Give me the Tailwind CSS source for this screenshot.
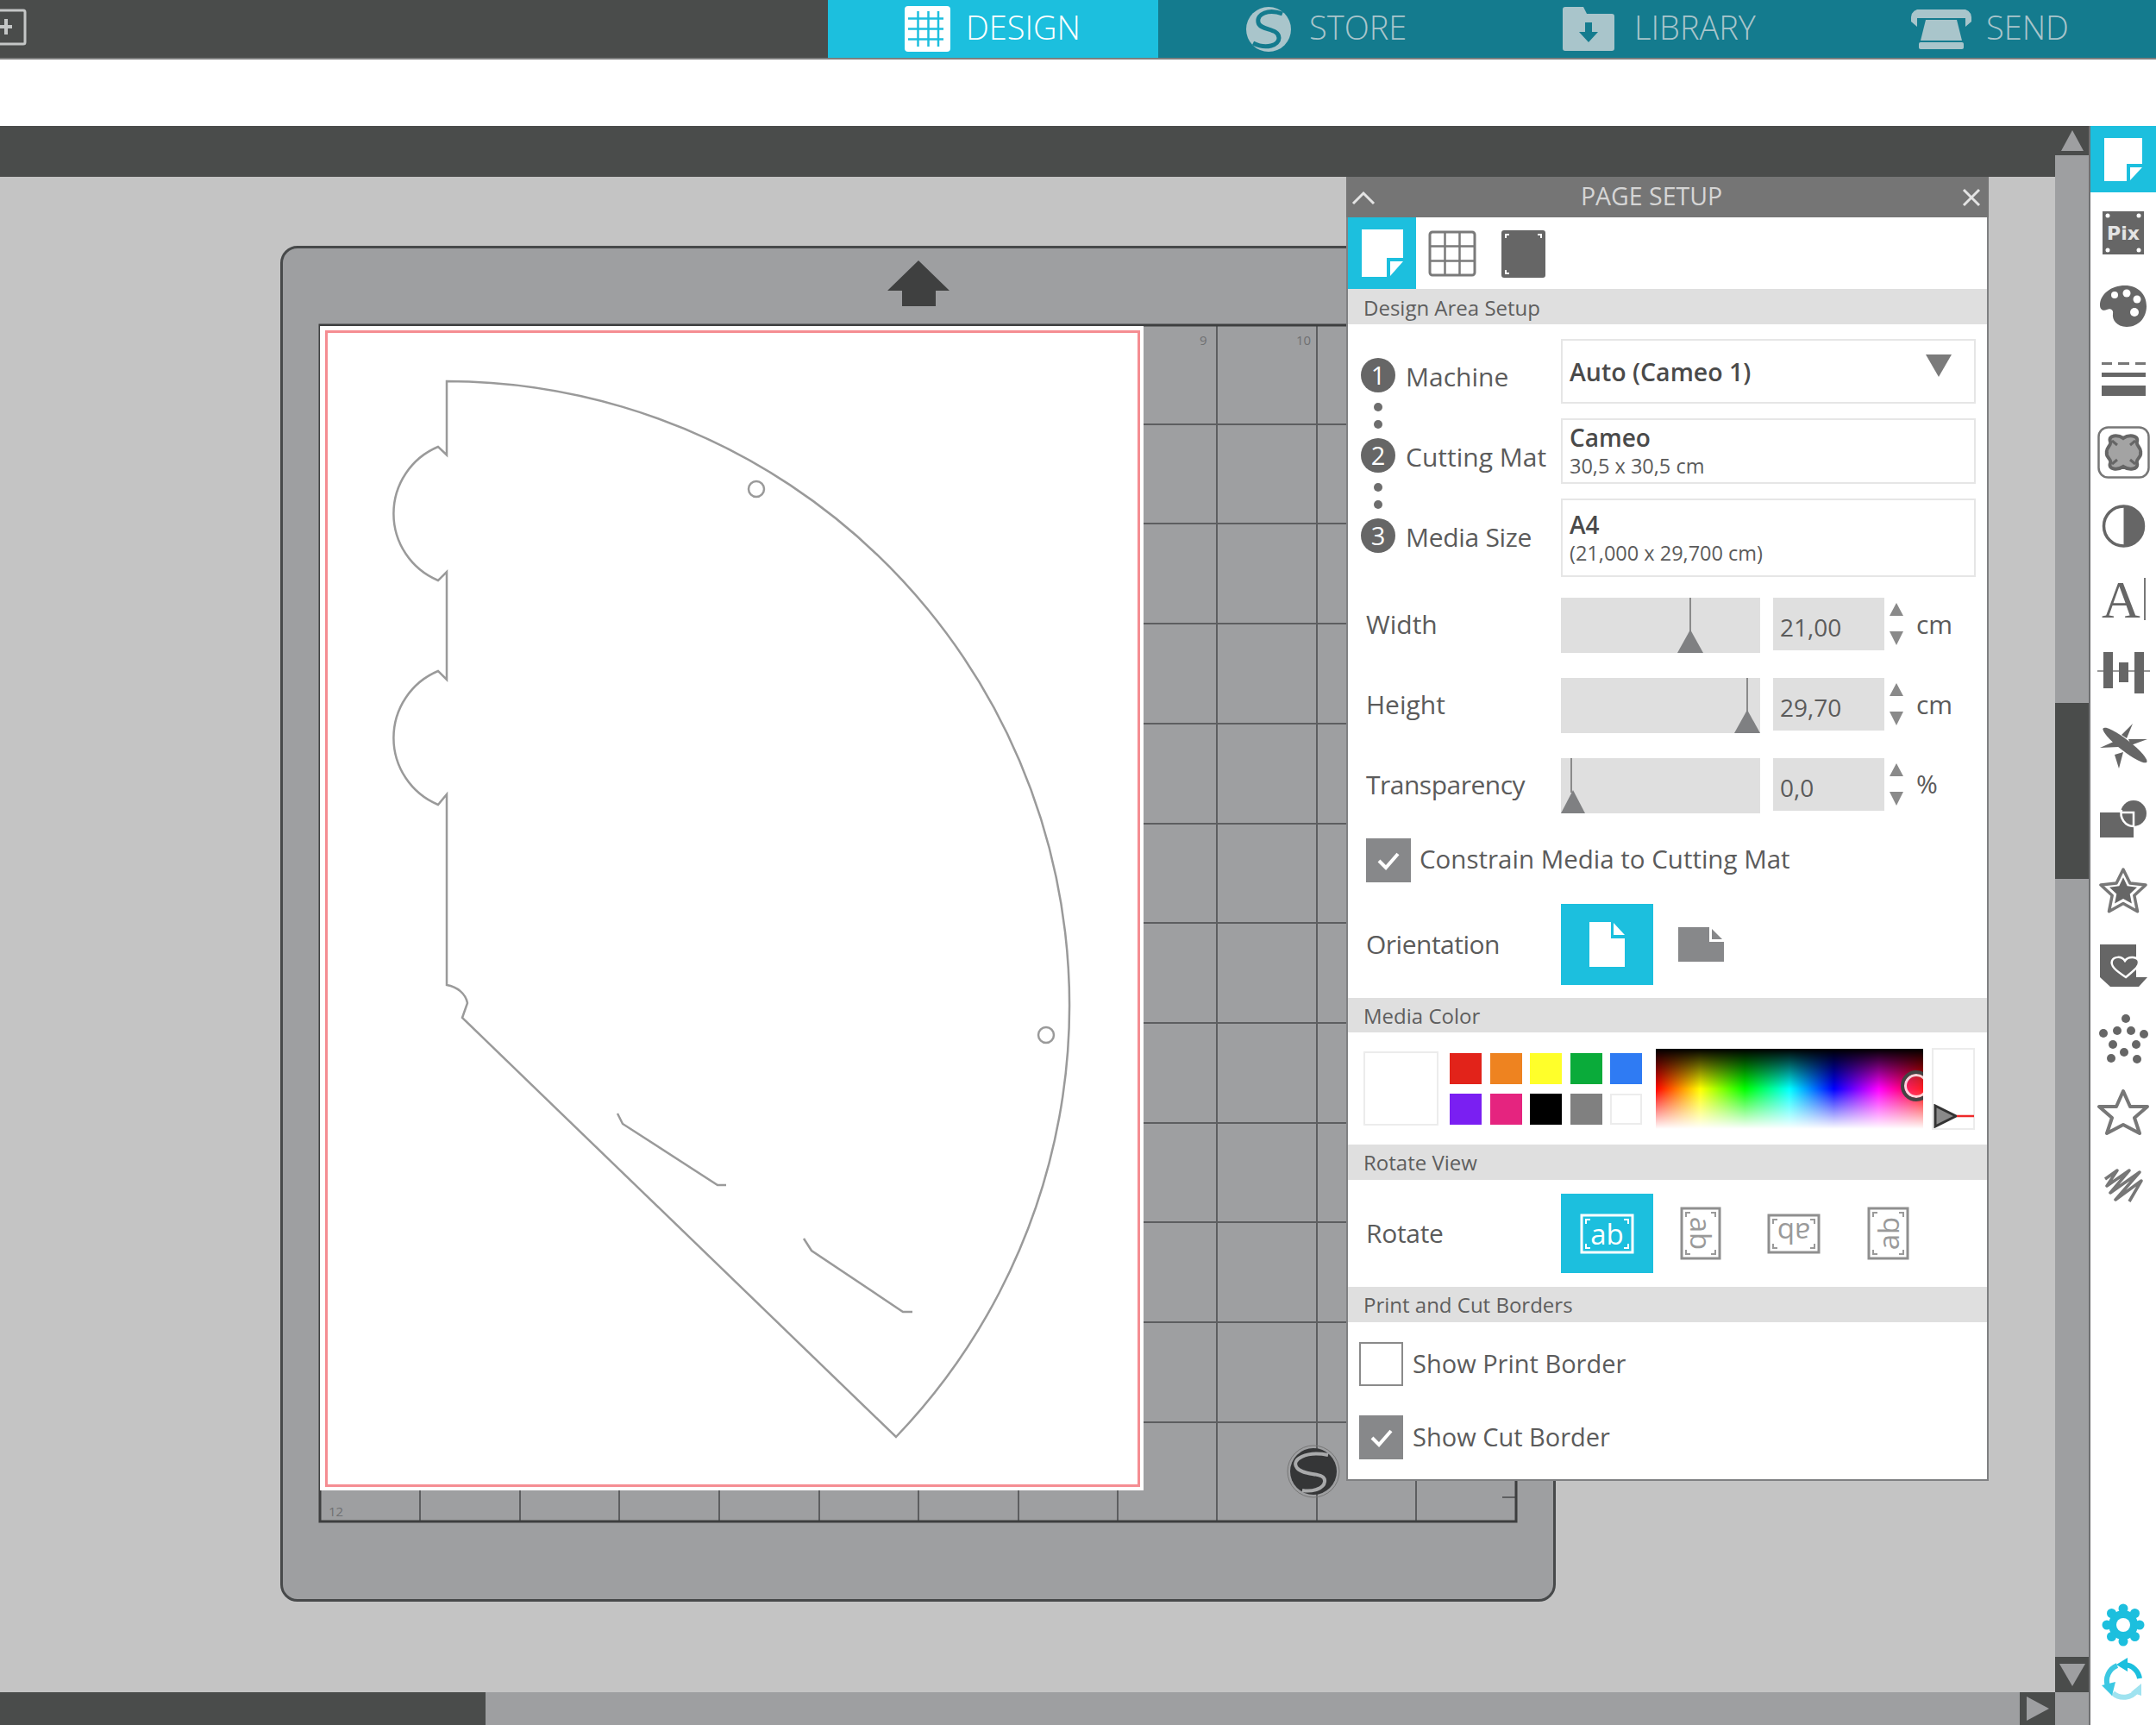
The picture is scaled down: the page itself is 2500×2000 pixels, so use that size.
<!DOCTYPE html>
<html lang="en">
<head>
<meta charset="UTF-8">
<title>Page Setup</title>
<script src="https://cdn.jsdelivr.net/npm/@tailwindcss/browser@4"></script>
</head>
<body class="font-['Open_Sans',sans-serif]">
<div class="w-[2500px] h-[2000px] flex flex-col overflow-hidden bg-white">

  <!-- top nav -->
  <div class="flex h-[69px] shrink-0 bg-[#4a4c4b] border-b-2 border-[#7d7e7e]">
    <div class="w-[960px] pt-[10px]">
      <svg width="31" height="43" viewBox="0 0 31 43"><rect x="-20" y="2" width="49" height="39" rx="2" fill="none" stroke="#c4c6c6" stroke-width="3"/><path d="M0 21H14M7 12V30" stroke="#c4c6c6" stroke-width="4"/></svg>
    </div>
    <div class="w-[383px] h-[67px] bg-[#1cbfde] flex items-center pl-[89px] gap-[18px] text-white text-[38px] font-light">
      <svg width="53" height="53" viewBox="0 0 53 53"><rect width="53" height="53" rx="4" fill="#fff"/><path d="M17.500 6V47M29.500 6V47M41 6V47M6 14.500H47M6 26.500H47M6 38.500H47" stroke="#1cbfde" stroke-width="2.500" transform="translate(-2 0)"/></svg>
      <span class="-mt-[5px]">DESIGN</span>
    </div>
    <div class="flex-1 h-[67px] bg-[#147b8e] flex items-center text-[#a9c5cb] text-[38px] font-light">
      <div class="flex items-center gap-[21px] ml-[102px] w-[367px]">
        <svg width="52" height="52" viewBox="0 0 52 52"><circle cx="26" cy="26" r="26" fill="#a9c5cb"/><path d="M42 8C26 2 12 8 14 18C16 28 38 24 38 36C38 44 24 50 8 42" fill="none" stroke="#147b8e" stroke-width="5"/></svg>
        <span class="-mt-[5px]">STORE</span>
      </div>
      <div class="flex items-center gap-[23px] w-[403px]">
        <svg width="60" height="51" viewBox="0 0 60 51"><path d="M0 3Q0 0 3 0H24L28 8H57Q60 8 60 11V48Q60 51 57 51H3Q0 51 0 48Z" fill="#a9c5cb"/><path d="M26 18H34V29H41L30 41L19 29H26Z" fill="#147b8e"/></svg>
        <span class="-mt-[5px]">LIBRARY</span>
      </div>
      <div class="flex items-center gap-[16px]">
        <svg width="72" height="46" viewBox="0 0 72 46"><path d="M8 0H64Q72 2 71 14L64 20V10H8V20L1 14Q0 2 8 0Z" fill="#a9c5cb"/><path d="M18 12H54L60 36H12Z" fill="#a9c5cb"/><rect x="10" y="38" width="52" height="8" rx="2" fill="#a9c5cb"/></svg>
        <span class="-mt-[5px]">SEND</span>
      </div>
    </div>
  </div>

  <!-- white toolbar -->
  <div class="h-[77px] shrink-0 bg-white"></div>

  <div class="flex flex-1 min-h-0">
    <!-- work area -->
    <div class="flex-1 flex flex-col min-w-0">
      <div class="flex flex-1 min-h-0">
        <div class="flex-1 flex flex-col min-w-0">
          <div class="h-[59px] shrink-0 bg-[#4a4c4b]"></div>
          <div class="flex-1 relative bg-[#c4c4c4]">

            <!-- cutting mat -->
            <div class="absolute left-[325px] top-[80px] w-[1479px] h-[1572px] rounded-[20px] border-[3px] border-[#47494a] bg-[#9e9fa1] overflow-hidden">
              <svg width="1473" height="1566" viewBox="328 288 1473 1566" class="block">
                <path d="M1065 302L1101 337H1085V355H1046V337H1029Z" fill="#3f4040"/>
                <g stroke="#5d5e60" stroke-width="2">
                  <path d="M371 492H1758M371 607H1758M371 723H1758M371 839H1758M371 955H1758M371 1070H1758M371 1186H1758M371 1302H1758M371 1417H1758M371 1533H1758M371 1649H1758"/>
                  <path d="M487 377V1764M603 377V1764M718 377V1764M834 377V1764M950 377V1764M1065 377V1764M1181 377V1764M1296 377V1764M1411 377V1764M1527 377V1764M1642 377V1764M1742 1736H1758"/>
                </g>
                <path d="M371 377H1758V1764H371Z" fill="none" stroke="#3d3e3f" stroke-width="3"/>
                <text x="1391" y="400" font-family="Open Sans" font-size="15" fill="#6f7072">9</text>
                <text x="1503" y="400" font-family="Open Sans" font-size="15" fill="#6f7072">10</text>
                <text x="381" y="1758" font-family="Open Sans" font-size="15" fill="#6f7072">12</text>
                <circle cx="1523" cy="1706" r="27" fill="#353637"/>
                <circle cx="1523" cy="1706" r="30" fill="none" stroke="#777" stroke-width="1"/>
                <path d="M1540 1687C1515 1682 1496 1692 1504 1702C1512 1712 1538 1706 1536 1718C1535 1726 1522 1730 1510 1728" fill="none" stroke="#a9aaab" stroke-width="4"/>
                <rect x="371" y="378" width="955" height="1350" fill="#fff"/>
                <rect x="378.500" y="384.500" width="942" height="1338" fill="none" stroke="#f58d92" stroke-width="3"/>
                <g fill="none" stroke="#9a9a9a" stroke-width="2.500">
                  <path d="M518 442A723.500 723.500 0 0 1 1039 1666L536 1180L542 1163C540 1152 530 1144 518 1142V921L508 933A84 84 0 0 1 508 778L518 788V663L508 673A84 84 0 0 1 508 518L518 527.500Z"/>
                  <circle cx="877" cy="567" r="9"/>
                  <circle cx="1213" cy="1200" r="9"/>
                  <path d="M716 1291L722 1303L832 1374H842M932 1436L941 1450L1047 1521H1058"/>
                </g>
              </svg>
            </div>

            <!-- page setup panel -->
            <div class="absolute left-[1561px] top-0 w-[745px] h-[1512px] flex flex-col bg-white border-x-2 border-b-2 border-[#7f8082] text-[#5b5b5b]">
              <div class="h-[47px] shrink-0 bg-[#757575] -mx-[2px] flex items-center justify-between pl-[5px] pr-[7px] text-[#d5d5d5]">
                <svg width="30" height="20" viewBox="0 0 30 20"><path d="M3 17L15 5L27 17" fill="none" stroke="#e4e4e4" stroke-width="3"/></svg>
                <span class="text-[28.500px] mr-[39px] -mt-[2px]">PAGE SETUP</span>
                <svg width="26" height="26" viewBox="0 0 26 26"><path d="M4 4L22 22M22 4L4 22" stroke="#e4e4e4" stroke-width="3"/></svg>
              </div>

              <div class="h-[83px] shrink-0 flex items-start">
                <div class="w-[79px] h-[83px] bg-[#1cbfde] flex items-center justify-center">
                  <svg width="48" height="55" viewBox="0 0 48 55"><path d="M0 0H48V33H29V55H0Z" fill="#fff"/><path d="M33 37H48L33 54Z" fill="#fff"/></svg>
                </div>
                <svg class="mt-[15px] ml-[14px]" width="56" height="54" viewBox="0 0 56 54"><rect x="2" y="2" width="52" height="50" rx="3" fill="none" stroke="#7a7a7a" stroke-width="3"/><path d="M19.500 2V52M36.500 2V52M2 18.500H54M2 35.500H54" stroke="#7a7a7a" stroke-width="2.500"/></svg>
                <svg class="mt-[15px] ml-[29px]" width="51" height="55" viewBox="0 0 51 55"><rect width="51" height="55" rx="3" fill="#666"/><path d="M5 9V5H9M42 5H46V9M5 46V50H9" fill="none" stroke="#fff" stroke-width="2"/></svg>
              </div>

              <div class="h-[41px] shrink-0 bg-[#dfdfdf] pl-[18px] pt-[2px] flex items-center text-[24px] text-[#5e5e5e]">Design Area Setup</div>

              <!-- machine, mat, media -->
              <div class="flex h-[293px] shrink-0">
                <div class="w-[247px] shrink-0 pl-[15px] pt-[39px] flex flex-col text-[30px] leading-[40px]">
                  <div class="flex items-center gap-[12px] h-[40px]"><span class="w-[40px] h-[40px] rounded-full bg-[#666] text-white flex items-center justify-center text-[29px]">1</span><span class="mt-[3px]">Machine</span></div>
                  <div class="h-[53px] w-[40px] flex flex-col items-center justify-center gap-[10px]"><i class="w-[10px] h-[10px] rounded-full bg-[#6d6d6d]"></i><i class="w-[10px] h-[10px] rounded-full bg-[#6d6d6d]"></i></div>
                  <div class="flex items-center gap-[12px] h-[40px]"><span class="w-[40px] h-[40px] rounded-full bg-[#666] text-white flex items-center justify-center text-[29px]">2</span><span class="mt-[3px] whitespace-nowrap">Cutting Mat</span></div>
                  <div class="h-[53px] w-[40px] flex flex-col items-center justify-center gap-[10px]"><i class="w-[10px] h-[10px] rounded-full bg-[#6d6d6d]"></i><i class="w-[10px] h-[10px] rounded-full bg-[#6d6d6d]"></i></div>
                  <div class="flex items-center gap-[12px] h-[40px]"><span class="w-[40px] h-[40px] rounded-full bg-[#666] text-white flex items-center justify-center text-[29px]">3</span><span class="mt-[3px] tracking-[-0.3px]">Media Size</span></div>
                </div>
                <div class="w-[481px] pt-[17px] flex flex-col gap-[17px]">
                  <div class="h-[75px] border-2 border-[#e6e6e6] pl-[8px] pr-[26px] flex items-center justify-between text-[28.500px] font-semibold text-[#4a4a4a]">
                    <span class="mt-[2px]">Auto (Cameo 1)</span>
                    <svg class="-mt-[13px]" width="30" height="26" viewBox="0 0 30 26"><path d="M0 0H30L15 26Z" fill="#7b7b7b"/></svg>
                  </div>
                  <div class="h-[76px] border-2 border-[#e6e6e6] pl-[8px] flex flex-col justify-center">
                    <span class="text-[28px] leading-[34px] font-semibold text-[#4a4a4a]">Cameo</span>
                    <span class="text-[23.500px] leading-[32px]">30,5 x 30,5 cm</span>
                  </div>
                  <div class="h-[91px] border-2 border-[#e6e6e6] pl-[8px] flex flex-col justify-center">
                    <span class="text-[28px] leading-[34px] font-semibold text-[#4a4a4a]">A4</span>
                    <span class="text-[23.500px] leading-[32px]">(21,000 x 29,700 cm)</span>
                  </div>
                </div>
              </div>

              <!-- sliders -->
              <div class="flex flex-col gap-[29px] pt-[24px] shrink-0">
                <div class="flex h-[64px]">
                  <span class="w-[247px] pl-[21px] text-[30px] leading-[64px] -mt-[1px]">Width</span>
                  <div class="w-[231px] h-[64px] bg-[#dfdfdf] relative"><i class="absolute left-[149px] top-0 w-[2px] h-[40px] bg-[#8a8a8a]"></i><svg class="absolute left-[135px] bottom-0" width="30" height="27" viewBox="0 0 30 27"><path d="M15 0L30 27H0Z" fill="#7f8082"/></svg></div>
                  <div class="w-[129px] h-[61px] ml-[15px] bg-[#dfdfdf] pl-[8px] text-[28px] leading-[68px]">21,00</div>
                  <svg class="ml-[6px] mt-[6px]" width="16" height="50" viewBox="0 0 16 50"><path d="M8 0L16 15H0ZM0 33H16L8 49Z" fill="#8a8a8a"/></svg>
                  <span class="ml-[15px] text-[30px] leading-[62px]">cm</span>
                </div>
                <div class="flex h-[64px]">
                  <span class="w-[247px] pl-[21px] text-[30px] leading-[64px] -mt-[1px]">Height</span>
                  <div class="w-[231px] h-[64px] bg-[#dfdfdf] relative"><i class="absolute left-[215px] top-0 w-[2px] h-[40px] bg-[#8a8a8a]"></i><svg class="absolute left-[201px] bottom-0" width="30" height="27" viewBox="0 0 30 27"><path d="M15 0L30 27H0Z" fill="#7f8082"/></svg></div>
                  <div class="w-[129px] h-[61px] ml-[15px] bg-[#dfdfdf] pl-[8px] text-[28px] leading-[68px]">29,70</div>
                  <svg class="ml-[6px] mt-[6px]" width="16" height="50" viewBox="0 0 16 50"><path d="M8 0L16 15H0ZM0 33H16L8 49Z" fill="#8a8a8a"/></svg>
                  <span class="ml-[15px] text-[30px] leading-[62px]">cm</span>
                </div>
                <div class="flex h-[64px]">
                  <span class="w-[247px] pl-[21px] text-[30px] leading-[64px] -mt-[1px] tracking-[-0.5px]">Transparency</span>
                  <div class="w-[231px] h-[64px] bg-[#dfdfdf] relative"><i class="absolute left-[11px] top-0 w-[2px] h-[40px] bg-[#8a8a8a]"></i><svg class="absolute left-0 bottom-0" width="28" height="27" viewBox="0 0 28 27"><path d="M14 0L28 27H0Z" fill="#7f8082"/></svg></div>
                  <div class="w-[129px] h-[61px] ml-[15px] bg-[#dfdfdf] pl-[8px] text-[28px] leading-[68px]">0,0</div>
                  <svg class="ml-[6px] mt-[6px]" width="16" height="50" viewBox="0 0 16 50"><path d="M8 0L16 15H0ZM0 33H16L8 49Z" fill="#8a8a8a"/></svg>
                  <span class="ml-[15px] text-[30px] leading-[60px]">%</span>
                </div>
              </div>

              <!-- constrain -->
              <div class="flex items-center gap-[10px] pl-[21px] mt-[29px] h-[51px] shrink-0 text-[29.500px]">
                <span class="w-[52px] h-[51px] bg-[#87888a] flex items-center justify-center">
                  <svg width="28" height="24" viewBox="0 0 28 24"><path d="M3 12L11 20L25 4" fill="none" stroke="#fff" stroke-width="4"/></svg>
                </span>
                <span class="-mt-[2px]">Constrain Media to Cutting Mat</span>
              </div>

              <!-- orientation -->
              <div class="flex items-center mt-[25px] h-[94px] shrink-0">
                <span class="w-[247px] pl-[21px] text-[30px] tracking-[-0.5px] -mt-[2px]">Orientation</span>
                <div class="w-[107px] h-[94px] bg-[#1cbfde] flex items-center justify-center">
                  <svg width="41" height="52" viewBox="0 0 41 52"><path d="M0 0H25V19H41V52H0Z" fill="#fff"/><path d="M28 1L41 15H28Z" fill="#fff"/></svg>
                </div>
                <svg class="ml-[29px]" width="53" height="40" viewBox="0 0 53 40"><path d="M0 0H36V17H53V40H0Z" fill="#87888a"/><path d="M39 2L51 14H39Z" fill="#87888a"/></svg>
              </div>

              <!-- media colour -->
              <div class="h-[40px] mt-[15px] shrink-0 bg-[#dfdfdf] pl-[18px] pt-[1px] flex items-center text-[24px] text-[#5e5e5e]">Media Color</div>
              <div class="flex h-[130px] shrink-0 pl-[18px]">
                <div class="w-[87px] h-[86px] mt-[22px] border-2 border-[#ececec]"></div>
                <div class="ml-[13px] mt-[24px] grid grid-cols-[repeat(5,37px)] grid-rows-[repeat(2,36px)] gap-x-[9.500px] gap-y-[11px]">
                  <i class="bg-[#e2231a]"></i><i class="bg-[#ee8320]"></i><i class="bg-[#ffff2a]"></i><i class="bg-[#0aab3a]"></i><i class="bg-[#2f7bf3]"></i>
                  <i class="bg-[#7a1ff2]"></i><i class="bg-[#e5247f]"></i><i class="bg-black"></i><i class="bg-[#808080]"></i><i class="border-2 border-[#ececec]"></i>
                </div>
                <div class="ml-[16px] mt-[19px] w-[310px] h-[93px] relative overflow-hidden bg-[linear-gradient(to_bottom,#000,transparent_50%,transparent_50%,#fff),linear-gradient(to_right,#f00,#ff0,#0f0,#0ff,#00f,#f0f,#f00)]">
                  <i class="absolute left-[284px] top-[25px] w-[36px] h-[36px] rounded-full border-[4px] border-[#444] bg-[#ff5c6c]/30 ring-[3px] ring-inset ring-white/80"></i>
                </div>
                <div class="ml-[10px] mt-[18px] w-[50px] h-[95px] border-2 border-[#ececec] relative">
                  <svg class="absolute -left-[1px] bottom-0" width="50" height="28" viewBox="0 0 50 28"><path d="M3 2L27 14L3 26Z" fill="#8a8a8a" stroke="#333" stroke-width="3"/><path d="M28 14H48" stroke="#ee2a2a" stroke-width="2.500"/></svg>
                </div>
              </div>

              <!-- rotate -->
              <div class="h-[41px] shrink-0 bg-[#dfdfdf] pl-[18px] pt-[1px] flex items-center text-[24px] text-[#5e5e5e]">Rotate View</div>
              <div class="flex items-center h-[124px] shrink-0">
                <span class="w-[247px] pl-[21px] text-[30px] tracking-[-0.3px] -mt-[2px]">Rotate</span>
                <div class="w-[107px] h-[92px] bg-[#1cbfde] flex items-center justify-center">
                  <svg width="63" height="47" viewBox="0 0 63 47"><rect x="2" y="2" width="59" height="43" fill="none" stroke="#fff" stroke-width="3"/><path d="M7 12V7H12M51 7H56V12M7 35V40H12M51 40H56V35" fill="none" stroke="#fff" stroke-width="2"/><text x="31.500" y="36" text-anchor="middle" font-family="Open Sans" font-size="33" fill="#fff">ab</text></svg>
                </div>
                <svg class="ml-[31px]" width="48" height="62" viewBox="0 0 48 62"><rect x="2" y="2" width="44" height="58" fill="none" stroke="#8f8f8f" stroke-width="3"/><path d="M7 12V7H12M36 7H41V12M7 50V55H12M36 55H41V50" fill="none" stroke="#9a9a9a" stroke-width="2"/><text x="0" y="0" text-anchor="middle" font-family="Open Sans" font-size="33" fill="#9a9a9a" transform="translate(11.500 31) rotate(90)">ab</text></svg>
                <svg class="ml-[53px]" width="62" height="47" viewBox="0 0 62 47"><rect x="2" y="2" width="58" height="43" fill="none" stroke="#8f8f8f" stroke-width="3"/><path d="M7 12V7H12M50 7H55V12M7 35V40H12M50 40H55V35" fill="none" stroke="#9a9a9a" stroke-width="2"/><text x="0" y="0" text-anchor="middle" font-family="Open Sans" font-size="33" fill="#9a9a9a" transform="translate(31 11) rotate(180)">ab</text></svg>
                <svg class="ml-[54px]" width="49" height="62" viewBox="0 0 49 62"><rect x="2" y="2" width="45" height="58" fill="none" stroke="#8f8f8f" stroke-width="3"/><path d="M7 12V7H12M37 7H42V12M7 50V55H12M37 55H42V50" fill="none" stroke="#9a9a9a" stroke-width="2"/><text x="0" y="0" text-anchor="middle" font-family="Open Sans" font-size="33" fill="#9a9a9a" transform="translate(37 31) rotate(-90)">ab</text></svg>
              </div>

              <!-- borders -->
              <div class="h-[41px] shrink-0 bg-[#dfdfdf] pl-[18px] pt-[1px] flex items-center text-[24px] text-[#5e5e5e]">Print and Cut Borders</div>
              <div class="flex flex-col pl-[13px] pt-[23px] gap-[34px] text-[29px]">
                <div class="flex items-center gap-[11px] h-[51px]"><span class="w-[51px] h-[51px] border-2 border-[#8a8a8a]"></span><span class="-mt-[2px]">Show Print Border</span></div>
                <div class="flex items-center gap-[11px] h-[51px]"><span class="w-[51px] h-[51px] bg-[#87888a] flex items-center justify-center"><svg width="28" height="24" viewBox="0 0 28 24"><path d="M3 12L11 20L25 4" fill="none" stroke="#fff" stroke-width="4"/></svg></span><span class="-mt-[2px]">Show Cut Border</span></div>
              </div>
            </div>
          </div>
        </div>

        <!-- vertical scrollbar -->
        <div class="w-[41px] shrink-0 flex flex-col bg-[#9e9fa1] border-r-2 border-[#6f7072]">
          <div class="h-[34px] bg-[#4a4c4b] flex items-center justify-center"><svg width="26" height="24" viewBox="0 0 26 24"><path d="M13 0L26 24H0Z" fill="#9e9fa1"/></svg></div>
          <div class="h-[635px]"></div>
          <div class="h-[204px] bg-[#4a4c4b]"></div>
          <div class="flex-1"></div>
          <div class="h-[41px] bg-[#4a4c4b] flex items-center justify-center"><svg width="30" height="26" viewBox="0 0 30 26"><path d="M0 0H30L15 26Z" fill="#9e9fa1"/></svg></div>
        </div>
      </div>

      <!-- horizontal scrollbar -->
      <div class="h-[38px] shrink-0 flex bg-[#9e9fa1]">
        <div class="w-[563px] bg-[#4a4c4b]"></div>
        <div class="flex-1"></div>
        <div class="w-[41px] bg-[#4a4c4b] flex items-center justify-center"><svg width="26" height="28" viewBox="0 0 26 28"><path d="M0 0L26 14L0 28Z" fill="#9e9fa1"/></svg></div>
        <div class="w-[41px] border-r-2 border-[#6f7072]"></div>
      </div>
    </div>

    <!-- right tool strip -->
    <div class="w-[76px] shrink-0 flex flex-col items-center bg-white">
      <div class="w-full h-[77px] bg-[#1cbfde] flex items-center justify-center">
        <svg width="44" height="50" viewBox="0 0 44 50"><path d="M0 0H44V30H26V50H0Z" fill="#fff"/><path d="M30 34H44L30 49Z" fill="#fff"/></svg>
      </div>
      <div class="h-[85px] mt-[4px] flex items-center">
        <svg width="48" height="50" viewBox="0 0 48 50"><rect width="48" height="50" fill="#666"/><g fill="#fff"><circle cx="6" cy="5" r="2.500"/><circle cx="42" cy="5" r="2.500"/><circle cx="6" cy="45" r="2.500"/><circle cx="42" cy="45" r="2.500"/></g><text x="24" y="33" text-anchor="middle" font-family="DejaVu Sans" font-weight="bold" font-size="22" fill="#e4e4e4">Pix</text></svg>
      </div>
      <div class="h-[85px] flex items-center">
        <svg width="56" height="50" viewBox="0 0 56 50"><path d="M30 1C14 1 1 11 1 24C1 29 5 31 9 29C13 27 17 29 16 34C15 40 20 49 32 49C46 49 55 38 55 25C55 11 45 1 30 1Z" fill="#666"/><g fill="#fff"><circle cx="18" cy="12" r="4"/><circle cx="32" cy="10" r="4.500"/><circle cx="44" cy="17" r="4.500"/><circle cx="41" cy="32" r="5"/></g></svg>
      </div>
      <div class="h-[85px] flex items-center">
        <svg width="51" height="39" viewBox="0 0 51 39"><path d="M0 0H12V3H0ZM19 0H32V3H19ZM39 0H51V3H39Z" fill="#777"/><rect y="12" width="51" height="5" fill="#666"/><rect y="27" width="51" height="12" fill="#666"/></svg>
      </div>
      <div class="h-[85px] flex items-center">
        <svg width="61" height="61" viewBox="0 0 61 61"><rect x="1.500" y="1.500" width="58" height="58" rx="11" fill="none" stroke="#777" stroke-width="2.500"/><path d="M15 18C12 10 24 10 30 14C36 10 48 10 46 18C44 22 52 26 50 31C52 36 44 38 46 43C48 51 36 51 30 47C24 51 12 51 15 43C17 38 9 36 11 31C9 26 17 22 15 18Z" fill="#a3a3a3" stroke="#666" stroke-width="4"/><path d="M17 17L23 22M44 17L38 22M17 44L23 39M44 44L38 39" stroke="#666" stroke-width="3"/></svg>
      </div>
      <div class="h-[85px] flex items-center">
        <svg width="51" height="50" viewBox="0 0 51 50"><circle cx="25.500" cy="25" r="23" fill="#fff" stroke="#666" stroke-width="3.500"/><path d="M25.500 2A23 23 0 0 1 25.500 48Z" fill="#666"/></svg>
      </div>
      <div class="h-[85px] flex items-center gap-[4px] pl-[1px]">
        <span class="font-['Liberation_Serif',serif] text-[62px] leading-[50px] text-[#666]">A</span>
        <i class="w-[2px] h-[49px] bg-[#777]"></i>
      </div>
      <div class="h-[85px] flex items-center">
        <svg width="61" height="48" viewBox="0 0 61 48"><path d="M0 22H61" stroke="#999" stroke-width="2"/><g fill="#666"><rect x="7" y="0" width="11" height="42"/><rect x="25" y="12" width="11" height="23"/><rect x="43" y="0" width="11" height="48"/></g></svg>
      </div>
      <div class="h-[85px] flex items-center">
        <svg width="55" height="52" viewBox="0 0 55 52"><path d="M38 0L31 17L25 13ZM55 18L36 25L33 18ZM0 28L18 20L22 27ZM22 52L17 36L27 33Z" fill="#666"/><ellipse cx="29" cy="25" rx="32" ry="6.500" fill="#666" transform="rotate(38 29 25)"/></svg>
      </div>
      <div class="h-[85px] flex items-center">
        <svg width="55" height="43" viewBox="0 0 55 43"><rect y="14" width="39" height="29" fill="#666"/><circle cx="39" cy="15" r="15" fill="#666"/><path d="M39 30A15 15 0 0 1 25 11" fill="none" stroke="#fff" stroke-width="2.500"/><path d="M25 14H39V30" fill="none" stroke="#fff" stroke-width="2.500"/></svg>
      </div>
      <div class="h-[85px] flex items-center">
        <svg width="58" height="57" viewBox="0 0 58 57"><g transform="translate(0 -3)"><polygon points="29,5 36.900,21 55,23 41.800,35.200 45.500,53.700 29,44.500 12.500,53.700 16.200,35.200 3,23 21.100,21" fill="#fff" stroke="#777" stroke-width="3.500" stroke-linejoin="round"/><polygon points="29,14.200 33.700,24.300 45,25.700 36.700,33.500 38.900,44.600 29,39.100 19.100,44.600 21.300,33.500 13,25.700 24.300,24.300" fill="#666"/></g></svg>
      </div>
      <div class="h-[85px] flex items-center">
        <svg width="55" height="49" viewBox="0 0 55 49"><path d="M0 0H42V38H0Z" fill="#666"/><path d="M0 38H55L45 49H12Z" fill="#666"/><path d="M30 38C18 30 12 25 14 19C16 14 25 13 29 19C33 13 44 14 45 20C46 26 38 31 30 38Z" fill="#666" stroke="#fff" stroke-width="2.500"/></svg>
      </div>
      <div class="h-[85px] flex items-center">
        <svg width="58" height="57" viewBox="0 0 58 57"><g fill="#666"><circle cx="32" cy="5" r="5"/><circle cx="6" cy="22" r="5"/><circle cx="22" cy="19" r="5"/><circle cx="38" cy="19" r="5"/><circle cx="53" cy="23" r="5"/><circle cx="17" cy="35" r="5"/><circle cx="44" cy="35" r="5"/><circle cx="15" cy="51" r="5"/><circle cx="30" cy="44" r="5"/><circle cx="45" cy="52" r="5"/></g></svg>
      </div>
      <div class="h-[85px] flex items-center">
        <svg width="62" height="55" viewBox="0 0 62 55"><polygon points="31,3 39,21 59,21 44,34 50,52 31,42 12,52 18,34 3,21 23,21" fill="#fff" stroke="#777" stroke-width="4" stroke-linejoin="round"/></svg>
      </div>
      <div class="h-[85px] flex items-center">
        <svg width="46" height="40" viewBox="0 0 46 40"><path d="M2 12L16 2L4 20L30 2L8 28L42 4L14 36L44 14L30 38" fill="none" stroke="#777" stroke-width="3.500" stroke-linejoin="round"/></svg>
      </div>
      <div class="mt-auto h-[63px] flex items-center">
        <svg width="50" height="50" viewBox="0 0 50 50"><g fill="#1cbfde"><circle cx="25" cy="25" r="17"/><circle cx="25" cy="6" r="5.500"/><circle cx="25" cy="44" r="5.500"/><circle cx="6" cy="25" r="5.500"/><circle cx="44" cy="25" r="5.500"/><circle cx="11.500" cy="11.500" r="5.500"/><circle cx="38.500" cy="11.500" r="5.500"/><circle cx="11.500" cy="38.500" r="5.500"/><circle cx="38.500" cy="38.500" r="5.500"/></g><circle cx="25" cy="25" r="8" fill="#fff"/></svg>
      </div>
      <div class="h-[63px] mb-[22px] flex items-center">
        <svg width="50" height="50" viewBox="0 0 50 50"><g fill="none" stroke-width="6"><path d="M27 8A19 19 0 0 1 44 24" stroke="#1cbfde"/><path d="M18 9A19 19 0 0 0 7 33" stroke="#3cc8e2"/><path d="M13 41A19 19 0 0 0 41 38" stroke="#9fe3f0"/></g><path d="M30 0L30 16L17 8Z" fill="#1cbfde"/><path d="M0 32L16 28L12 44Z" fill="#3cc8e2"/><path d="M46 30L46 44L34 40Z" fill="#9fe3f0"/></svg>
      </div>
    </div>
  </div>
</div>
</body>
</html>
